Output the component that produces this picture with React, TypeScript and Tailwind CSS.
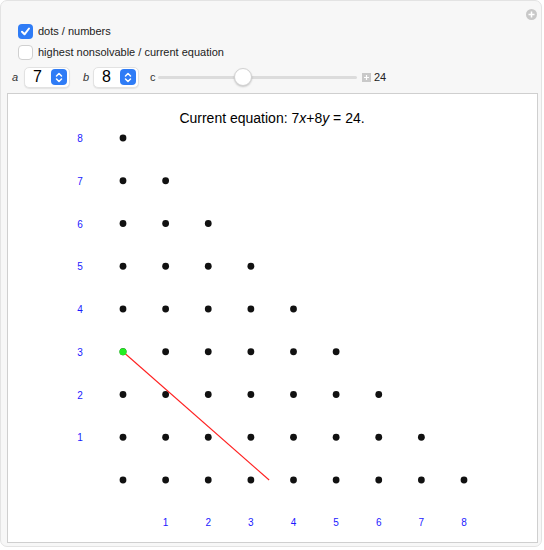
import React from 'react'

const COLS = [0, 1, 2, 3, 4, 5, 6, 7, 8]
const OX = 115 // x of i=0 inside plot
const OY = 386 // y of j=0 inside plot
const SX = 42.625
const SY = 42.75

function Stepper() {
  return (
    <div className="w-[16px] h-[16px] rounded-[4px] bg-[#2f7cf6] flex items-center justify-center">
      <svg width="8" height="11" viewBox="0 0 8 11" fill="none" stroke="white" strokeWidth="1.5" strokeLinecap="round" strokeLinejoin="round">
        <path d="M1.5 4 L4 1.5 L6.5 4" />
        <path d="M1.5 7 L4 9.5 L6.5 7" />
      </svg>
    </div>
  )
}

function NumSelect({ value }: { value: string }) {
  return (
    <div className="w-[46px] h-[21px] bg-white rounded-[5px] border border-[#e2e2e2] shadow-[0_1px_1px_rgba(0,0,0,0.08)] flex items-center justify-between pl-[8px] pr-[2px]">
      <span className="text-[16px] text-black leading-none">{value}</span>
      <Stepper />
    </div>
  )
}

export default function App() {
  const dots: { x: number; y: number }[] = []
  for (let j = 0; j <= 8; j++) {
    for (let i = 0; i <= 8 - j; i++) dots.push({ x: OX + i * SX, y: OY - j * SY })
  }

  return (
    <div className="w-[544px] h-[550px] bg-white" style={{ fontFamily: '"Liberation Sans", Arial, sans-serif' }}>
      <div className="relative w-[542px] h-[547px] rounded-[7px] border border-[#e3e3e3] bg-[#f7f7f7]">
        {/* top right plus */}
        <div className="absolute right-[4px] top-[8px] w-[11px] h-[11px] rounded-full bg-[#c8c8c8] flex items-center justify-center">
          <svg width="7" height="7" viewBox="0 0 7 7" stroke="white" strokeWidth="1.5">
            <path d="M3.5 0.5 V6.5 M0.5 3.5 H6.5" />
          </svg>
        </div>

        <div className="pt-[23px] pl-[17px] flex flex-col gap-[6px]">
          <div className="flex items-center gap-[5px] h-[15px]">
            <div className="w-[15px] h-[15px] rounded-[4px] bg-[#2f7cf6] flex items-center justify-center">
              <svg width="11" height="11" viewBox="0 0 11 11" fill="none" stroke="white" strokeWidth="2" strokeLinecap="round" strokeLinejoin="round">
                <path d="M2 5.8 L4.5 8.3 L9 2.5" />
              </svg>
            </div>
            <span className="text-[11px] text-[#222]">dots / numbers</span>
          </div>
          <div className="flex items-center gap-[5px] h-[15px]">
            <div className="w-[15px] h-[15px] rounded-[4px] bg-white border border-[#d0d0d0]" />
            <span className="text-[11px] text-[#222]">highest nonsolvable / current equation</span>
          </div>
        </div>

        <div className="flex items-center pl-[11px] mt-[6px] h-[22px]">
          <span className="text-[11px] italic text-[#333] w-[12px]">a</span>
          <NumSelect value="7" />
          <span className="text-[11px] italic text-[#333] ml-[13px] w-[10px]">b</span>
          <NumSelect value="8" />
          <span className="text-[11px] text-[#333] ml-[11px] w-[8px]">c</span>
          <div className="relative w-[199px] h-[20px] flex items-center">
            <div className="w-full h-[3px] rounded-full bg-[#dcdcdc]" />
            <div className="absolute left-[76px] top-[1px] w-[18px] h-[18px] rounded-full bg-white border border-[#d2d2d2] shadow-[0_1px_2px_rgba(0,0,0,0.2)]" />
          </div>
          <div className="ml-[5px] w-[9px] h-[9px] bg-[#c9c9c9] flex items-center justify-center">
            <svg width="7" height="7" viewBox="0 0 7 7" stroke="white" strokeWidth="1.2">
              <path d="M3.5 1 V6 M1 3.5 H6" />
            </svg>
          </div>
          <span className="ml-[3px] text-[11px] text-[#222]">24</span>
        </div>

        <div className="ml-[6px] mt-[5px] w-[531px] h-[450px] bg-white border border-[#cfcfcf]">
          <svg width="529" height="448" viewBox="0 0 529 448">
            <text x="264" y="29" textAnchor="middle" fontSize="14" fill="#000" fontFamily='"Liberation Sans", Arial, sans-serif'>
              Current equation: 7<tspan fontStyle="italic">x</tspan>+8<tspan fontStyle="italic">y</tspan> = 24.
            </text>
            {COLS.slice(1).map((j) => (
              <text key={'y' + j} x={72} y={OY - j * SY + 4} textAnchor="middle" fontSize="10" fill="#1a1aff" fontFamily='"Liberation Sans", Arial, sans-serif'>
                {j}
              </text>
            ))}
            {COLS.slice(1).map((i) => (
              <text key={'x' + i} x={OX + i * SX} y={432} textAnchor="middle" fontSize="10" fill="#1a1aff" fontFamily='"Liberation Sans", Arial, sans-serif'>
                {i}
              </text>
            ))}
            {dots.map((d, k) => (
              <circle key={k} cx={d.x} cy={d.y} r="3.4" fill="#111" />
            ))}
            <line x1={OX} y1={OY - 3 * SY} x2={OX + (24 / 7) * SX} y2={OY} stroke="#ff2020" strokeWidth="1.1" />
            <circle cx={OX} cy={OY - 3 * SY} r="3.6" fill="#22ee22" />
          </svg>
        </div>
      </div>
    </div>
  )
}
